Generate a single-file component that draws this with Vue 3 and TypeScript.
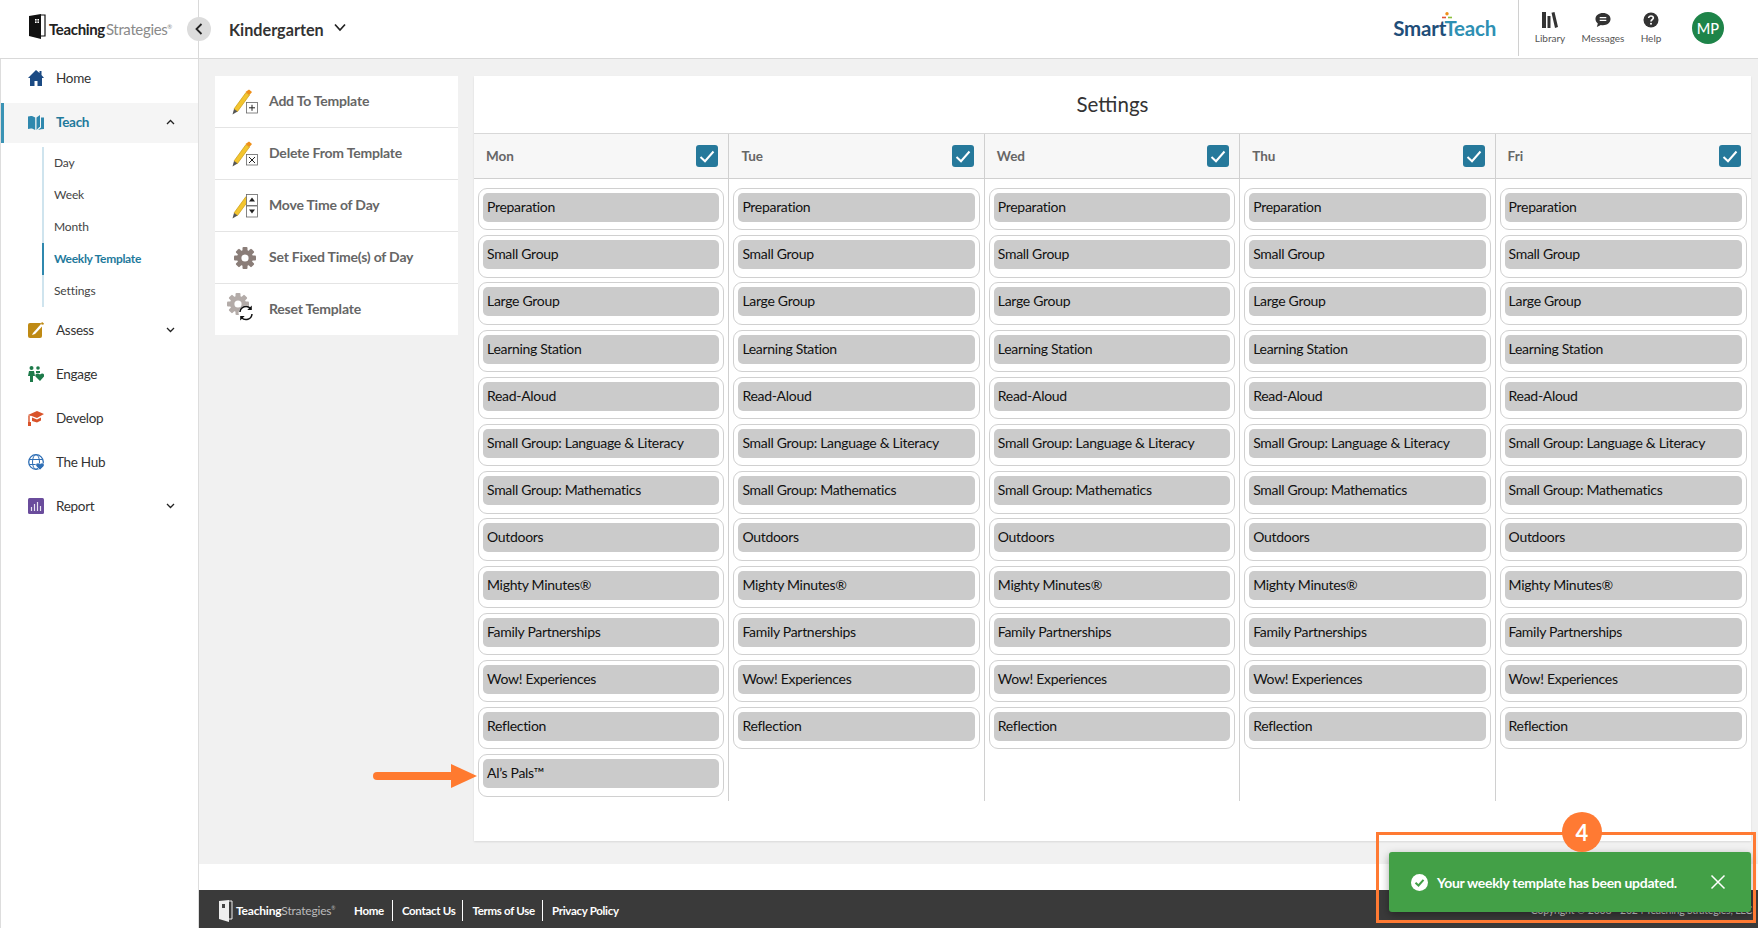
<script setup lang="ts">
const subItems = ['Day', 'Week', 'Month', 'Weekly Template', 'Settings']
const days = ['Mon', 'Tue', 'Wed', 'Thu', 'Fri']
const base = ['Preparation', 'Small Group', 'Large Group', 'Learning Station', 'Read-Aloud', 'Small Group: Language & Literacy', 'Small Group: Mathematics', 'Outdoors', 'Mighty Minutes®', 'Family Partnerships', 'Wow! Experiences', 'Reflection']
const rowsFor = (d: string): string[] => (d === 'Mon' ? [...base, 'Al’s Pals™'] : base)
const teeth = [0, 45, 90, 135, 180, 225, 270, 315]
const links = ['Home', 'Contact Us', 'Terms of Use', 'Privacy Policy']
</script>

<template>
  <div class="page">
    <header class="topbar">
      <div class="brand">
        <svg class="door" width="17" height="25" viewBox="0 0 17 25"><path d="M0 2 12 0v25L0 22z" fill="#111"/><path d="M12 1h4v21h-4" fill="none" stroke="#111" stroke-width="1.2"/><rect x="6" y="5" width="4" height="4" fill="#fff"/><path d="M8 5v4M6 7h4" stroke="#111" stroke-width=".8"/></svg>
        <span class="brand-text"><b>Teaching</b>Strategies<sup>®</sup></span>
      </div>
      <div class="title-block">
        <span class="grade">Kindergarten</span>
        <svg class="gchev" width="12" height="9" viewBox="0 0 12 9"><path d="M1 1.500 6 7l5-5.500" fill="none" stroke="#222" stroke-width="1.700"/></svg>
      </div>
      <div class="smart">
        <span class="s1">Smart</span><span class="s2">Teach</span>
        <svg class="spark" width="12" height="7" viewBox="0 0 12 7"><circle cx="6" cy="1.800" r="1.700" fill="#ef8f18"/><path d="M1 5.500h4" stroke="#e0533a" stroke-width="1.600"/><path d="M7 5.500h4" stroke="#8cbf3f" stroke-width="1.600"/></svg>
      </div>
      <nav class="tools">
        <div class="tool t1">
          <svg width="16" height="16" viewBox="0 0 16 16"><path d="M0 0h4v16H0zM5.500 4h3v12h-3zM9.500 .8l3-.8L16 15l-3 1z" fill="#333"/></svg>
          <span>Library</span>
        </div>
        <div class="tool t2">
          <svg width="16" height="16" viewBox="0 0 17 17"><path d="M8.500 1C13 1 16.500 3.600 16.500 7.500S13 14 8.500 14c-.9 0-1.600 0-2.300-.2L2 16l1-3.700C1.500 11 .5 9.400.5 7.500.5 3.600 4 1 8.500 1z" fill="#333"/><path d="M5 6h7M5 9h7" stroke="#fff" stroke-width="1.300"/></svg>
          <span>Messages</span>
        </div>
        <div class="tool t3">
          <svg width="16" height="16" viewBox="0 0 17 17"><circle cx="8.500" cy="8.500" r="8" fill="#333"/><path d="M6 6.500C6 5 7.200 4.200 8.500 4.200S11 5 11 6.500 8.500 8 8.500 10" fill="none" stroke="#fff" stroke-width="1.700"/><circle cx="8.500" cy="12.500" r="1.100" fill="#fff"/></svg>
          <span>Help</span>
        </div>
        <div class="avatar">MP</div>
      </nav>
      <button class="collapse" type="button">
        <svg width="8" height="12" viewBox="0 0 8 12"><path d="M6.500 1 1.500 6l5 5" fill="none" stroke="#222" stroke-width="1.800"/></svg>
      </button>
    </header>

    <div class="body">
      <aside class="side">
        <div class="nav nav-home">
          <svg class="ni" width="16" height="16" viewBox="0 0 16 16"><path d="M8 0 0 8h2v8h4.500v-5h3v5H14V8h2l-2.500-3V1h-2v2z" fill="#1b4a83"/></svg>
          <span>Home</span>
        </div>
        <div class="nav nav-teach">
          <svg class="ni" width="16" height="15" viewBox="0 0 16 15"><path d="M0 1.500C3 .5 5 1 7.200 2.500V15C5 13.500 3 13 0 14z" fill="#2f88ae"/><path d="M8.500 2.500 12 0v11.500L8.500 15z" fill="#2f88ae"/><path d="M13 2.500h3V14c-2 0-4 .2-6 1l3-2.500z" fill="#2f88ae"/></svg>
          <span>Teach</span>
          <svg class="chev" width="9" height="6" viewBox="0 0 9 6"><path d="M1 5 4.500 1.500 8 5" fill="none" stroke="#222" stroke-width="1.300"/></svg>
        </div>
        <ul class="sub">
          <li v-for="s in subItems" :key="s" :class="{ on: s === 'Weekly Template' }">{{ s }}</li>
        </ul>
        <div class="nav">
          <svg class="ni" width="16" height="16" viewBox="0 0 16 16"><rect y="1" width="14" height="15" rx="2" fill="#bf8a14"/><path d="M5 11 13 2l2 1.500L7 12l-3 1z" fill="#fff"/><path d="M14 0l2 1.500-1 1.500-2-1.500z" fill="#bf8a14"/></svg>
          <span>Assess</span>
          <svg class="chev" width="9" height="6" viewBox="0 0 9 6"><path d="M1 1 4.500 4.500 8 1" fill="none" stroke="#222" stroke-width="1.300"/></svg>
        </div>
        <div class="nav">
          <svg class="ni" width="16" height="16" viewBox="0 0 16 16"><circle cx="3.500" cy="2" r="2" fill="#1d7a4a"/><path d="M1 5h5l1 5H5v6H2v-6H0z" fill="#1d7a4a"/><circle cx="10" cy="2" r="1.800" fill="#1d7a4a"/><path d="M8 5h4v2H8zM12 15 7.500 10.500C6.500 8 9.500 6.500 12 8.500c2.500-2 5-.5 4 2z" fill="#1d7a4a"/></svg>
          <span>Engage</span>
        </div>
        <div class="nav">
          <svg class="ni" width="16" height="16" viewBox="0 0 16 16"><path d="M0 5 9 1l7 3-7 4-6-2.200V6z" fill="#d9532a"/><path d="M4 7.500 9 9.500l4-2v3l-4 2-5-1.500z" fill="#d9532a"/><path d="M1 5.500v7" stroke="#d9532a" stroke-width="1.400"/><rect y="12" width="3" height="4" fill="#d9532a"/></svg>
          <span>Develop</span>
        </div>
        <div class="nav">
          <svg class="ni" width="16" height="16" viewBox="0 0 16 16"><circle cx="8" cy="8" r="7.300" fill="none" stroke="#2f6fb5" stroke-width="1.300"/><ellipse cx="8" cy="8" rx="3.500" ry="7.300" fill="none" stroke="#2f6fb5"/><path d="M1 5.500h14M1 10.500h14" stroke="#2f6fb5"/><path d="M12 16 8 12c-1-2.500 2-4 4-2 2-2 5-.5 4 2z" fill="#2f6fb5" stroke="#fff" stroke-width=".6"/></svg>
          <span>The Hub</span>
        </div>
        <div class="nav">
          <svg class="ni" width="16" height="16" viewBox="0 0 16 16"><rect width="16" height="16" rx="1.500" fill="#6a4c9c"/><path d="M3.500 9v4M6.500 6v7M9.500 4v9M12.500 8v5" stroke="#fff" stroke-width="1.200" opacity=".85"/></svg>
          <span>Report</span>
          <svg class="chev" width="9" height="6" viewBox="0 0 9 6"><path d="M1 1 4.500 4.500 8 1" fill="none" stroke="#222" stroke-width="1.300"/></svg>
        </div>
      </aside>

      <div class="content">
        <main class="main">
          <section class="actions">
            <div class="action">
              <svg class="ai" width="26" height="26" viewBox="0 0 26 26">
                <path d="M2 20 14 3.500l3.500 2.500L5.500 22.500z" fill="#f3c52f" stroke="#c89a10" stroke-width=".7"/><path d="M13.500 3 17 .5l3 2.500-2.500 3z" fill="#ef8f18"/><path d="M2 20 .5 25.500l5-3z" fill="#555"/>
                <rect x="14.500" y="13.500" width="11" height="10.500" fill="#fff" stroke="#666" stroke-width=".8"/><path d="M17 18.800h6M20 15.800v6" stroke="#222" stroke-width="1"/>
              </svg>
              <span>Add To Template</span>
            </div>
            <div class="action">
              <svg class="ai" width="26" height="26" viewBox="0 0 26 26">
                <path d="M2 20 14 3.500l3.500 2.500L5.500 22.500z" fill="#f3c52f" stroke="#c89a10" stroke-width=".7"/><path d="M13.500 3 17 .5l3 2.500-2.500 3z" fill="#ef8f18"/><path d="M2 20 .5 25.500l5-3z" fill="#555"/>
                <rect x="14.500" y="13.500" width="11" height="10.500" fill="#fff" stroke="#666" stroke-width=".8"/><path d="M17 16 23 22M23 16l-6 6" stroke="#222" stroke-width="1"/>
              </svg>
              <span>Delete From Template</span>
            </div>
            <div class="action">
              <svg class="ai" width="26" height="26" viewBox="0 0 26 26">
                <path d="M2 20 14 3.500l3.500 2.500L5.500 22.500z" fill="#f3c52f" stroke="#c89a10" stroke-width=".7"/><path d="M2 20 .5 25.500l5-3z" fill="#555"/>
                <rect x="14.500" y="1.500" width="11" height="11" fill="#fff" stroke="#666" stroke-width=".8"/><rect x="14.500" y="13" width="11" height="11" fill="#fff" stroke="#666" stroke-width=".8"/><path d="M20 4.500 23 8.500h-6zM20 20.500 17 16.500h6z" fill="#222"/>
              </svg>
              <span>Move Time of Day</span>
            </div>
            <div class="action">
              <svg class="ai" width="26" height="26" viewBox="-13 -13 26 26">
                <rect v-for="a in teeth" :key="a" x="-2.500" y="-11" width="5" height="5" rx="1" fill="#8a7d78" :transform="`rotate(${a})`"/>
                <circle r="8" fill="#8a7d78"/><circle r="3.600" fill="#fff"/>
              </svg>
              <span>Set Fixed Time(s) of Day</span>
            </div>
            <div class="action">
              <svg class="ai ai-reset" width="30" height="30" viewBox="0 0 30 30">
                <g transform="translate(12 11)">
                  <rect v-for="a in teeth" :key="a" x="-2.500" y="-11" width="5" height="5" rx="1" fill="#b3aba8" :transform="`rotate(${a})`"/>
                  <circle r="8" fill="#b3aba8"/><circle r="3.600" fill="#fff"/>
                </g>
                <circle cx="20" cy="20" r="7.500" fill="#fff"/>
                <path d="M14 19a6 6 0 0 1 10.500-3.500M26 21a6 6 0 0 1-10.500 3.500" fill="none" stroke="#111" stroke-width="1.500"/><path d="M25.800 12.500v4.500h-4.500zM14.200 27.500V23h4.500z" fill="#111"/>
              </svg>
              <span>Reset Template</span>
            </div>
          </section>

          <section class="card">
            <h1>Settings</h1>
            <div class="grid">
              <div v-for="d in days" :key="d" class="col">
                <div class="day">
                  <span>{{ d }}</span>
                  <span class="check">
                    <svg width="16" height="13" viewBox="0 0 16 13"><path d="M1.500 7 6 11.200 14.500 1.500" fill="none" stroke="#fff" stroke-width="2"/></svg>
                  </span>
                </div>
                <div class="rows">
                  <div v-for="r in rowsFor(d)" :key="r" class="slot"><div class="chip">{{ r }}</div></div>
                </div>
              </div>
            </div>
          </section>
        </main>
        <div class="gap"></div>
        <footer class="foot">
          <svg class="fdoor" width="14" height="22" viewBox="0 0 14 22"><path d="M0 1 10 0v22L0 19z" fill="#eee"/><path d="M10 1h3v18h-3" fill="none" stroke="#eee"/><rect x="3" y="4" width="3" height="4" fill="#444"/></svg>
          <span class="fbrand"><b>Teaching</b>Strategies<sup>®</sup></span>
          <a v-for="l in links" :key="l" class="flink">{{ l }}</a>
          <span class="copy">Copyright © 2008 - 2024 Teaching Strategies, LLC</span>
        </footer>
      </div>
    </div>

    <div class="toast">
      <svg width="17" height="17" viewBox="0 0 17 17"><circle cx="8.500" cy="8.500" r="8.500" fill="#fff"/><path d="M4.500 8.800 7.500 11.500 12.500 5.800" fill="none" stroke="#43a047" stroke-width="2"/></svg>
      <span class="toast-msg">Your weekly template has been updated.</span>
      <svg width="16" height="16" viewBox="0 0 16 16"><path d="M1.500 1.500 14.500 14.500M14.500 1.500 1.500 14.500" stroke="#fff" stroke-width="1.500"/></svg>
    </div>
    <div class="mark"></div>
    <div class="badge">4</div>
    <svg class="arrow" width="104" height="26" viewBox="0 0 104 26"><path d="M4 13h76" stroke="#ff7a2f" stroke-width="8" stroke-linecap="round"/><path d="M78 1l26 12-26 12z" fill="#ff7a2f"/></svg>
  </div>
</template>

<style>
html, body { margin: 0; padding: 0; background: #fff; overflow: hidden; }
</style>

<style scoped>
.page { position: relative; width: 1758px; height: 928px; overflow: hidden; font-family: Lato, "Noto Sans", sans-serif; color: #333; display: flex; flex-direction: column; background: #fff; }

.topbar { height: 58px; flex: none; display: flex; align-items: center; border-bottom: 1px solid #d9d9d9; position: relative; }
.brand { width: 199px; height: 100%; box-sizing: border-box; padding: 14px 0 0 29px; display: flex; align-items: flex-start; gap: 3px; border-right: 1px solid #d9d9d9; flex: none; }
.brand-text { font-size: 15px; line-height: 25px; color: #8a8a8a; letter-spacing: -.35px; white-space: nowrap; }
.brand-text b { color: #222; font-weight: 700; margin-right: 1px; }
.brand-text sup { font-size: 6px; }
.collapse { position: absolute; left: 187px; top: 17px; width: 24px; height: 24px; border: 0; border-radius: 50%; background: #dcdcdc; padding: 0; display: flex; align-items: center; justify-content: center; }
.title-block { margin-left: 30px; display: flex; align-items: center; gap: 10px; }
.grade { font-size: 16.200px; font-weight: 700; color: #333; }
.gchev { margin-top: -3px; }
.smart { margin-left: auto; font-size: 20.500px; font-weight: 700; letter-spacing: -.2px; margin-right: 22px; white-space: nowrap; position: relative; top: -1px; }
.s1 { color: #1f4e79; }
.s2 { color: #2e90b3; }
.spark { position: absolute; left: 48px; top: -4px; }
.tools { width: 240px; height: 56px; align-self: flex-start; box-sizing: border-box; border-left: 1px solid #d0d0d0; position: relative; display: flex; }
.tool { display: flex; flex-direction: column; align-items: center; font-size: 10px; color: #555; gap: 4px; padding-top: 12px; }
.t1 { margin-left: 15px; width: 32px; }
.t2 { margin-left: 11px; width: 52px; }
.t3 { margin-left: 4px; width: 36px; }
.avatar { width: 32px; height: 32px; border-radius: 50%; background: #1e8449; color: #fff; font-size: 14.500px; font-weight: 500; display: flex; align-items: center; justify-content: center; margin: 12px 0 0 23px; }

.body { flex: 1; display: flex; min-height: 0; }
.side { width: 199px; flex: none; box-sizing: border-box; border-left: 1px solid #ddd; border-right: 1px solid #ddd; }
.nav { height: 44px; box-sizing: border-box; display: flex; align-items: center; padding: 0 0 2px 27px; font-size: 13.500px; letter-spacing: -.3px; color: #333; position: relative; }
.ni { margin-right: 12px; flex: none; }
.chev { position: absolute; left: 165px; top: 18px; }
.nav-home { padding-bottom: 6px; }
.nav-teach { height: 40px; background: #f5f5f5; box-shadow: inset 3px 0 0 #3a93b5; color: #1f7a9c; font-weight: 700; }
.nav-teach .chev { top: 16px; }
.sub { list-style: none; margin: 4px 0 2px 41px; padding: 0; border-left: 2px solid #cfe4ee; }
.sub li { height: 32px; line-height: 32px; font-size: 12px; letter-spacing: -.1px; color: #444; padding-left: 10px; margin-left: -2px; border-left: 2px solid transparent; }
.sub li.on { color: #1f7a9c; font-weight: 700; letter-spacing: -.3px; border-left: 2px solid #2f88ae; }

.content { flex: 1; min-width: 0; display: flex; flex-direction: column; }
.main { height: 805px; flex: none; background: #f1f1f1; box-sizing: border-box; padding: 17px 7px 23px 16px; display: flex; gap: 16px; }
.actions { width: 243px; height: 259px; flex: none; background: #fff; display: flex; flex-direction: column; }
.action { height: 52px; flex: 1; display: flex; align-items: center; padding-left: 17px; font-size: 14px; letter-spacing: -.2px; font-weight: 700; color: #666; border-top: 1px solid #e4e4e4; position: relative; }
.action:first-child { border-top: 0; }
.action span { position: absolute; left: 54px; top: 16px; }
.ai-reset { margin: -4px 0 0 -6px; }

.card { flex: 1; min-width: 0; background: #fff; box-shadow: 0 1px 2px rgba(0, 0, 0, .1); display: flex; flex-direction: column; }
h1 { margin: 0; height: 57px; flex: none; line-height: 57px; text-align: center; font-size: 20.500px; font-weight: 400; color: #333; }
.grid { display: grid; grid-template-columns: repeat(5, 1fr); border-top: 1px solid #d8d8d8; }
.col { border-right: 1px solid #d0d0d0; min-width: 0; height: 667px; box-sizing: border-box; }
.col:last-child { border-right: 0; }
.day { height: 45px; box-sizing: border-box; display: flex; align-items: center; justify-content: space-between; background: #f7f7f7; border-bottom: 1px solid #d0d0d0; padding: 0 10px 0 12px; font-size: 13.500px; font-weight: 700; color: #666; }
.check { width: 22px; height: 22px; border-radius: 3px; background: #26799b; display: flex; align-items: center; justify-content: center; }
.rows { padding: 9px 4px 0 4px; display: flex; flex-direction: column; gap: 4.800px; }
.slot { height: 42.400px; box-sizing: border-box; border: 1px solid #d0d0d0; border-radius: 9px; padding: 4px 4px 0; }
.chip { height: 29px; line-height: 28px; background: #cbcbcb; border-radius: 5px; padding-left: 4px; font-size: 14px; letter-spacing: -.3px; color: #111; white-space: nowrap; }

.gap { height: 26px; flex: none; }
.foot { flex: 1; background: #3a3a3a; display: flex; align-items: center; padding: 3px 0 0 20px; color: #fff; position: relative; }
.fdoor { margin-right: 3px; }
.fbrand { font-size: 12px; color: #bbb; width: 118px; white-space: nowrap; letter-spacing: -.2px; }
.fbrand b { color: #fff; font-weight: 700; }
.fbrand sup { font-size: 5px; }
.flink { font-size: 11.500px; font-weight: 700; letter-spacing: -.3px; padding: 0 7px 0 9px; line-height: 21px; border-left: 1px solid #fff; }
.flink:first-of-type { border-left: 0; padding-left: 0; padding-right: 8px; }
.copy { position: absolute; right: 6px; top: 14px; font-size: 10.500px; letter-spacing: -.2px; color: #ccc; }

.toast { position: absolute; left: 1389px; top: 852px; width: 362px; height: 60px; box-sizing: border-box; background: #43a047; border-radius: 3px; box-shadow: 0 3px 8px rgba(0, 0, 0, .35); display: flex; align-items: center; padding: 0 25px 0 22px; color: #fff; font-size: 14px; letter-spacing: -.3px; font-weight: 700; }
.toast-msg { margin-left: 9px; flex: 1; }
.mark { position: absolute; left: 1376px; top: 832px; width: 380px; height: 91px; box-sizing: border-box; border: 3px solid #ff7a33; }
.badge { position: absolute; left: 1562px; top: 812px; width: 40px; height: 40px; border-radius: 50%; background: #ff7a33; color: #fff; font-size: 22px; font-weight: 700; display: flex; align-items: center; justify-content: center; }
.arrow { position: absolute; left: 373px; top: 763px; }
</style>
